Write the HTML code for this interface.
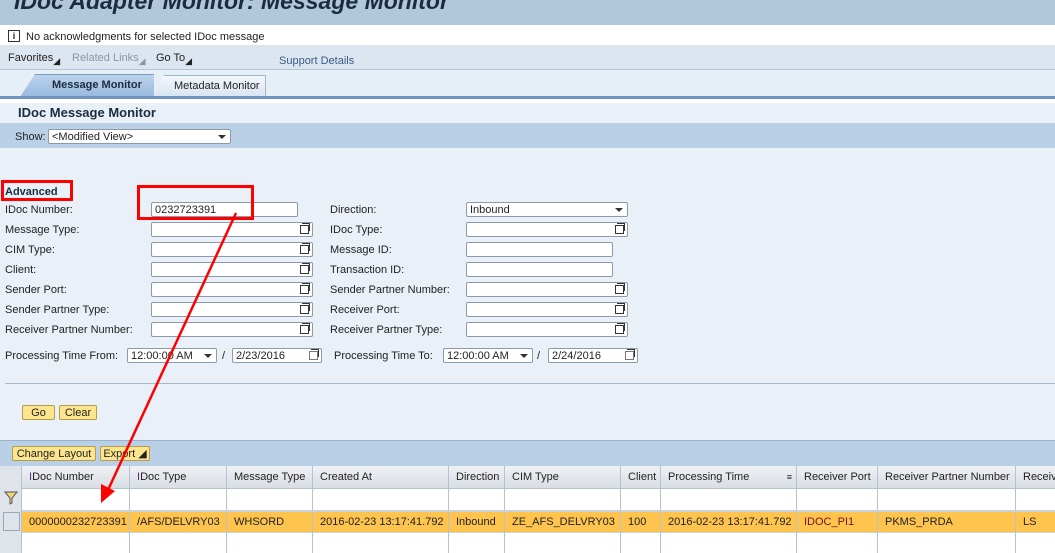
<!DOCTYPE html>
<html><head><style>
*{margin:0;padding:0;box-sizing:border-box}
body{width:1055px;height:553px;overflow:hidden;font-family:"Liberation Sans",sans-serif;font-size:11px;color:#222;background:#e9f0f7;position:relative}
.a{position:absolute}
.inp{position:absolute;height:15px;background:#fff;border:1px solid #8d9aaa;border-radius:2px;font-size:11px;padding-left:3px;line-height:14px}
.ic{position:absolute;right:3px;top:2px;width:9px;height:9px;border:1px solid #333;background:#fff}
.ic:before{content:"";position:absolute;left:1px;top:-3px;width:7px;height:7px;border-top:1px solid #333;border-right:1px solid #333}
.lbl{position:absolute;font-size:11px;color:#222}
.dd{position:absolute;right:4px;top:5px;border-left:4px solid transparent;border-right:4px solid transparent;border-top:4px solid #333}
.btn{position:absolute;height:15px;background:#fde58e;border:1px solid #b79c4e;border-radius:2px;font-size:11px;line-height:14px;text-align:center}
.th,.td{position:absolute;font-size:11px;padding-left:7px;border-right:1px solid #b4c2d2}
.th{top:466px;height:23px;line-height:23px;background:linear-gradient(#eef1f4,#d9dee4);border-bottom:1px solid #b4c2d2}
</style></head><body>
<div class="a" style="left:0;top:0;width:1055px;height:25px;background:#b1c7dc"></div>
<div class="a" style="left:14px;top:-12px;font-size:23px;font-weight:bold;font-style:italic;color:#1b2c3f">IDoc Adapter Monitor: Message Monitor</div>
<div class="a" style="left:0;top:25px;width:1055px;height:20px;background:#fff"></div>
<div class="a" style="left:8px;top:30px;width:12px;height:12px;border:1px solid #333;font-size:9px;font-weight:bold;text-align:center;line-height:10px">i</div>
<div class="a" style="left:26px;top:31px">No acknowledgments for selected IDoc message</div>
<div class="a" style="left:0;top:45px;width:1055px;height:25px;background:#dce6f0;border-bottom:1px solid #b4c4d4"></div>
<div class="a" style="left:8px;top:52px">Favorites<sub>◢</sub></div>
<div class="a" style="left:72px;top:52px;color:#8a97a5">Related Links<sub>◢</sub></div>
<div class="a" style="left:156px;top:52px">Go To<sub>◢</sub></div>
<div class="a" style="left:279px;top:55px;color:#3c5a86">Support Details</div>
<div class="a" style="left:0;top:70px;width:1055px;height:27px;background:#e6eef6"></div>
<div class="a" style="left:20px;top:74px;width:134px;height:23px;background:linear-gradient(#bcd3ec,#98b9df);clip-path:polygon(15px 0,100% 0,100% 100%,0 100%);border-top:1px solid #7a9cc4"></div>
<div class="a" style="left:52px;top:79px;font-weight:bold;color:#1b2c3f">Message Monitor</div>
<div class="a" style="left:154px;top:75px;width:112px;height:22px;background:linear-gradient(#f3f7fb,#d9e5f2);border:1px solid #9fb6cf;clip-path:polygon(10px 0,100% 0,100% 100%,0 100%)"></div>
<div class="a" style="left:174px;top:80px">Metadata Monitor</div>
<div class="a" style="left:0;top:96px;width:1055px;height:3px;background:#6f94c0"></div>
<div class="a" style="left:0;top:99px;width:1055px;height:4px;background:#fff"></div>
<div class="a" style="left:18px;top:105px;font-size:13px;font-weight:bold;color:#1b2c3f">IDoc Message Monitor</div>
<div class="a" style="left:0;top:123px;width:1055px;height:25px;background:#b9d0e6"></div>
<div class="lbl" style="left:15px;top:131px">Show:</div>
<div class="inp" style="left:48px;top:129px;width:183px">&lt;Modified View&gt;<span class="dd"></span></div>

<div class="lbl" style="left:5px;top:186px;font-weight:bold;color:#1b2c3f">Advanced</div>
<div class="a" style="left:1px;top:180px;width:72px;height:21px;border:3px solid #f00"></div>

<div class="lbl" style="left:5px;top:204px">IDoc Number:</div>
<div class="inp" style="left:151px;top:202px;width:147px">0232723391</div>
<div class="lbl" style="left:5px;top:224px">Message Type:</div><div class="inp" style="left:151px;top:222px;width:162px"><span class="ic"></span></div>
<div class="lbl" style="left:5px;top:244px">CIM Type:</div><div class="inp" style="left:151px;top:242px;width:162px"><span class="ic"></span></div>
<div class="lbl" style="left:5px;top:264px">Client:</div><div class="inp" style="left:151px;top:262px;width:162px"><span class="ic"></span></div>
<div class="lbl" style="left:5px;top:284px">Sender Port:</div><div class="inp" style="left:151px;top:282px;width:162px"><span class="ic"></span></div>
<div class="lbl" style="left:5px;top:304px">Sender Partner Type:</div><div class="inp" style="left:151px;top:302px;width:162px"><span class="ic"></span></div>
<div class="lbl" style="left:5px;top:324px">Receiver Partner Number:</div><div class="inp" style="left:151px;top:322px;width:162px"><span class="ic"></span></div>

<div class="lbl" style="left:330px;top:204px">Direction:</div><div class="inp" style="left:466px;top:202px;width:162px">Inbound<span class="dd"></span></div>
<div class="lbl" style="left:330px;top:224px">IDoc Type:</div><div class="inp" style="left:466px;top:222px;width:162px"><span class="ic"></span></div>
<div class="lbl" style="left:330px;top:244px">Message ID:</div><div class="inp" style="left:466px;top:242px;width:147px"></div>
<div class="lbl" style="left:330px;top:264px">Transaction ID:</div><div class="inp" style="left:466px;top:262px;width:147px"></div>
<div class="lbl" style="left:330px;top:284px">Sender Partner Number:</div><div class="inp" style="left:466px;top:282px;width:162px"><span class="ic"></span></div>
<div class="lbl" style="left:330px;top:304px">Receiver Port:</div><div class="inp" style="left:466px;top:302px;width:162px"><span class="ic"></span></div>
<div class="lbl" style="left:330px;top:324px">Receiver Partner Type:</div><div class="inp" style="left:466px;top:322px;width:162px"><span class="ic"></span></div>

<div class="lbl" style="left:5px;top:350px">Processing Time From:</div>
<div class="inp" style="left:127px;top:348px;width:90px">12:00:00 AM<span class="dd"></span></div>
<div class="lbl" style="left:222px;top:350px">/</div>
<div class="inp" style="left:232px;top:348px;width:90px">2/23/2016<span class="ic" style="border-color:#777"></span></div>
<div class="lbl" style="left:334px;top:350px">Processing Time To:</div>
<div class="inp" style="left:443px;top:348px;width:90px">12:00:00 AM<span class="dd"></span></div>
<div class="lbl" style="left:537px;top:350px">/</div>
<div class="inp" style="left:548px;top:348px;width:90px">2/24/2016<span class="ic" style="border-color:#777"></span></div>

<div class="a" style="left:5px;top:383px;width:1050px;height:1px;background:#a9b8c8"></div>
<div class="btn" style="left:22px;top:405px;width:33px">Go</div>
<div class="btn" style="left:59px;top:405px;width:38px">Clear</div>

<div class="a" style="left:137px;top:185px;width:117px;height:35px;border:3px solid #f00"></div>

<div class="a" style="left:0;top:440px;width:1055px;height:26px;background:#b9d0e6;border-top:1px solid #97b2cf"></div>
<div class="btn" style="left:12px;top:446px;width:84px">Change Layout</div>
<div class="btn" style="left:100px;top:446px;width:50px">Export ◢</div>

<div class="a" style="left:0;top:466px;width:22px;height:87px;background:#dfe4ea;border-right:1px solid #b4c2d2"></div>
<div class="th" style="left:22px;width:108px"><span style="color:#5a2d82">I</span>Doc Number</div>
<div class="th" style="left:130px;width:97px"><span style="color:#5a2d82">I</span>Doc Type</div>
<div class="th" style="left:227px;width:86px">Message Type</div>
<div class="th" style="left:313px;width:136px">Created At</div>
<div class="th" style="left:449px;width:56px">Direction</div>
<div class="th" style="left:505px;width:116px">CIM Type</div>
<div class="th" style="left:621px;width:40px">Client</div>
<div class="th" style="left:661px;width:136px">Processing Time<span style="position:absolute;right:4px;font-size:9px">≡</span></div>
<div class="th" style="left:797px;width:81px">Receiver Port</div>
<div class="th" style="left:878px;width:138px">Receiver Partner Number</div>
<div class="th" style="left:1016px;width:60px">Receiv</div>
<div class="a" style="left:22px;top:489px;width:1033px;height:21px;background:#fff"></div>
<svg class="a" style="left:4px;top:491px" width="14" height="14"><path d="M1 1H13L8 7V12L6 13V7Z" fill="#f4d27a" stroke="#555" stroke-width="1"/></svg>
<div class="a" style="left:22px;top:510px;width:1033px;height:22px;background:#fec44e;border-top:2px solid #c9d3de"></div>
<div class="a" style="left:3px;top:512px;width:17px;height:19px;background:#dfe4ea;border:1px solid #9aa8b8"></div>
<div class="a" style="left:22px;top:532px;width:1033px;height:21px;background:#fff;border-top:1px solid #c9d3de"></div>
<div class="td" style="left:22px;top:512px;width:108px;height:41px;line-height:20px;padding-left:7px">0000000232723391</div>
<div class="td" style="left:130px;top:512px;width:97px;height:41px;line-height:20px">/AFS/DELVRY03</div>
<div class="td" style="left:227px;top:512px;width:86px;height:41px;line-height:20px">WHSORD</div>
<div class="td" style="left:313px;top:512px;width:136px;height:41px;line-height:20px">2016-02-23 13:17:41.792</div>
<div class="td" style="left:449px;top:512px;width:56px;height:41px;line-height:20px">Inbound</div>
<div class="td" style="left:505px;top:512px;width:116px;height:41px;line-height:20px">ZE_AFS_DELVRY03</div>
<div class="td" style="left:621px;top:512px;width:40px;height:41px;line-height:20px">100</div>
<div class="td" style="left:661px;top:512px;width:136px;height:41px;line-height:20px">2016-02-23 13:17:41.792</div>
<div class="td" style="left:797px;top:512px;width:81px;height:41px;line-height:20px;color:#7a1020">IDOC_PI1</div>
<div class="td" style="left:878px;top:512px;width:138px;height:41px;line-height:20px">PKMS_PRDA</div>
<div class="td" style="left:1016px;top:512px;width:60px;height:41px;line-height:20px">LS</div>
<div class="td" style="left:22px;top:489px;width:108px;height:21px"></div>
<div class="td" style="left:130px;top:489px;width:97px;height:21px"></div>
<div class="td" style="left:227px;top:489px;width:86px;height:21px"></div>
<div class="td" style="left:313px;top:489px;width:136px;height:21px"></div>
<div class="td" style="left:449px;top:489px;width:56px;height:21px"></div>
<div class="td" style="left:505px;top:489px;width:116px;height:21px"></div>
<div class="td" style="left:621px;top:489px;width:40px;height:21px"></div>
<div class="td" style="left:661px;top:489px;width:136px;height:21px"></div>
<div class="td" style="left:797px;top:489px;width:81px;height:21px"></div>
<div class="td" style="left:878px;top:489px;width:138px;height:21px"></div>

<svg class="a" style="left:0;top:0" width="1055" height="553">
<line x1="236" y1="213" x2="108" y2="490" stroke="#f00" stroke-width="2.5"/>
<polygon points="101,503 101,484 115,491" fill="#f00"/>
</svg>
</body></html>
